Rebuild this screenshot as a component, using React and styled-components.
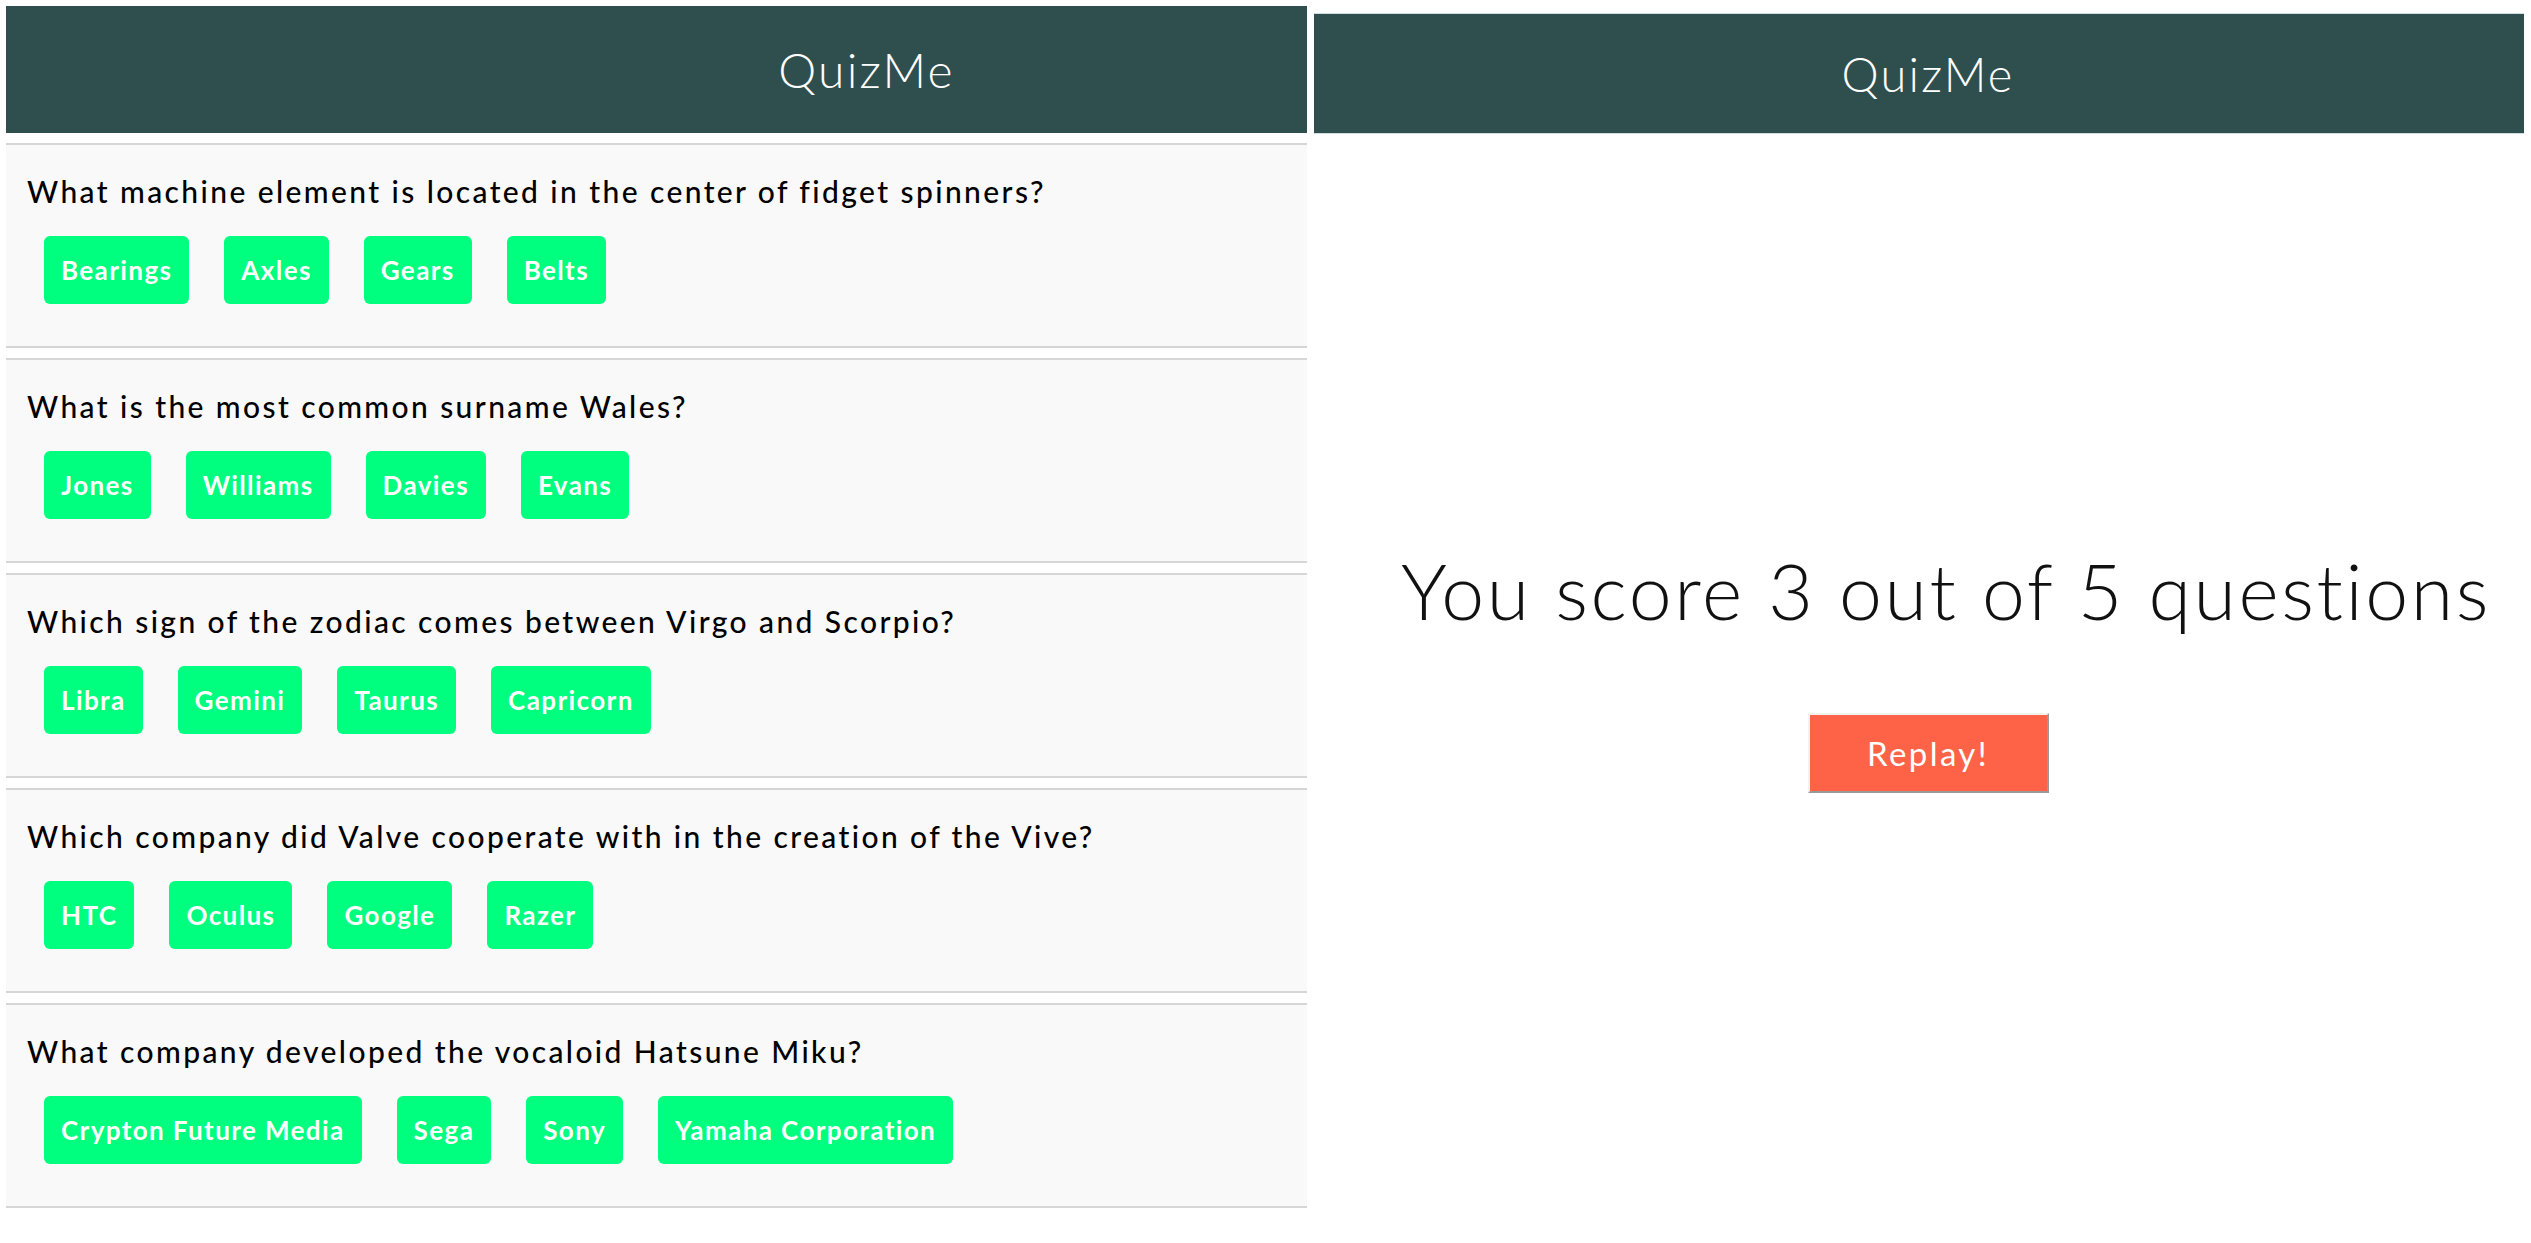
import React from "react";
import styled, { createGlobalStyle } from "styled-components";

const GlobalStyle = createGlobalStyle`
  html, body {
    margin: 0;
    padding: 0;
    background: #fff;
    font-family: Lato, "Open Sans", "Liberation Sans", sans-serif;
  }
`;

const Page = styled.div`
  display: flex;
  align-items: flex-start;
  gap: 7px;
  padding: 6px 7px 0 6px;
  width: 2531px;
  height: 1243px;
  box-sizing: border-box;
  overflow: hidden;
`;

const Pane = styled.div`
  width: ${(p) => p.width}px;
  margin-top: ${(p) => p.offset || 0}px;
  flex-shrink: 0;
`;

const Header = styled.header`
  height: ${(p) => p.height}px;
  background: #2f4f4f;
  display: flex;
  align-items: center;
  justify-content: center;
  padding-left: ${(p) => p.shift || 0}px;
  box-sizing: border-box;
  border-top: ${(p) => (p.edged ? "1px solid #cfdde2" : "none")};
  border-bottom: ${(p) => (p.edged ? "1px solid #cfdde2" : "none")};
`;

const Title = styled.h1`
  margin: 0;
  color: #fff;
  font-size: ${(p) => p.size}px;
  font-weight: 300;
  letter-spacing: 2.2px;
`;

const Quiz = styled.div`
  margin-top: 10px;
  display: flex;
  flex-direction: column;
  gap: 10px;
`;

const Section = styled.section`
  height: 205px;
  box-sizing: border-box;
  background: #f9f9f9;
  border-top: 2px solid #d6d6d6;
  border-bottom: 2px solid #d6d6d6;
  padding: 26px 21px 0;
`;

const Question = styled.p`
  margin: 0;
  font-size: 30px;
  line-height: 40px;
  font-weight: 500;
  color: #000;
  letter-spacing: 2.4px;
  white-space: nowrap;
`;

const Answers = styled.div`
  display: flex;
  gap: 35px;
  margin-top: 25px;
  padding-left: 17px;
`;

const Answer = styled.button`
  height: 68px;
  padding: 0 17px;
  border: none;
  border-radius: 6px;
  background: #00ff7f;
  color: #fff;
  font-family: inherit;
  font-size: 26px;
  font-weight: 700;
  letter-spacing: 1.4px;
  cursor: pointer;
`;

const Result = styled.div`
  display: flex;
  flex-direction: column;
  align-items: center;
  padding-left: 18px;
`;

const Score = styled.h2`
  margin: 410px 0 0 36px;
  font-size: 77px;
  line-height: 92px;
  font-weight: 300;
  color: #111;
  letter-spacing: 2.6px;
  white-space: nowrap;
`;

const Replay = styled.button`
  margin-top: 77px;
  width: 241px;
  height: 80px;
  background: #ff6347;
  color: #fff;
  font-family: inherit;
  font-size: 33px;
  font-weight: 400;
  letter-spacing: 2.4px;
  border-style: solid;
  border-width: 2px;
  border-color: #f2f2f2 #9a9a9a #9a9a9a #f2f2f2;
  cursor: pointer;
`;

const questions = [
  {
    text: "What machine element is located in the center of fidget spinners?",
    answers: ["Bearings", "Axles", "Gears", "Belts"],
  },
  {
    text: "What is the most common surname Wales?",
    answers: ["Jones", "Williams", "Davies", "Evans"],
  },
  {
    text: "Which sign of the zodiac comes between Virgo and Scorpio?",
    answers: ["Libra", "Gemini", "Taurus", "Capricorn"],
  },
  {
    text: "Which company did Valve cooperate with in the creation of the Vive?",
    answers: ["HTC", "Oculus", "Google", "Razer"],
  },
  {
    text: "What company developed the vocaloid Hatsune Miku?",
    answers: ["Crypton Future Media", "Sega", "Sony", "Yamaha Corporation"],
  },
];

const App = () => {
  return (
    <>
      <GlobalStyle />
      <Page>
        <Pane width={1301}>
          <Header height={127} shift={420}>
            <Title size={48}>QuizMe</Title>
          </Header>
          <Quiz>
            {questions.map((q) => (
              <Section key={q.text}>
                <Question>{q.text}</Question>
                <Answers>
                  {q.answers.map((a) => (
                    <Answer key={a}>{a}</Answer>
                  ))}
                </Answers>
              </Section>
            ))}
          </Quiz>
        </Pane>
        <Pane width={1210} offset={7}>
          <Header height={121} shift={18} edged>
            <Title size={47}>QuizMe</Title>
          </Header>
          <Result>
            <Score>You score 3 out of 5 questions</Score>
            <Replay>Replay!</Replay>
          </Result>
        </Pane>
      </Page>
    </>
  );
};

export default App;
